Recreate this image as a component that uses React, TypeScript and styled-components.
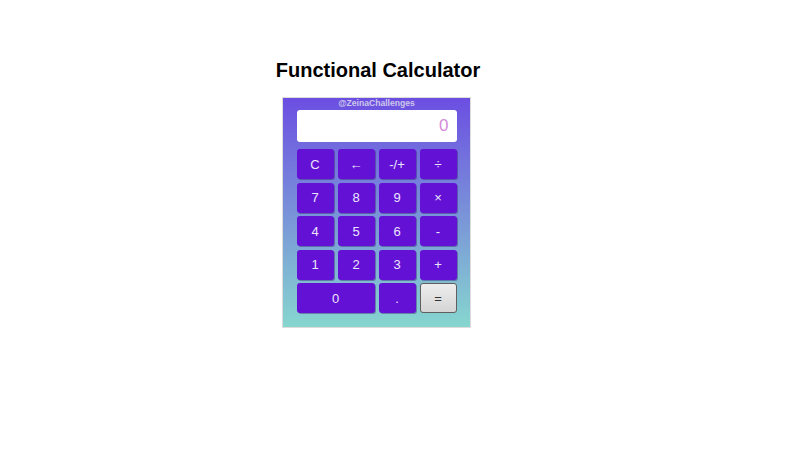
import styled, { createGlobalStyle } from 'styled-components'

const GlobalStyle = createGlobalStyle`
body {
    margin: 0;
    font-family: "Liberation Sans", Arial, sans-serif;
    background: #fff;
}
`

const keys: { label: string; wide?: boolean; equal?: boolean }[] = [
    { label: 'C' }, { label: '←' }, { label: '-/+' }, { label: '÷' },
    { label: '7' }, { label: '8' }, { label: '9' }, { label: '×' },
    { label: '4' }, { label: '5' }, { label: '6' }, { label: '-' },
    { label: '1' }, { label: '2' }, { label: '3' }, { label: '+' },
    { label: '0', wide: true }, { label: '.' }, { label: '=', equal: true },
]

const App = () => {
    return (
        <>
            <GlobalStyle />
            <Page>
                <Title>Functional Calculator</Title>
                <Card>
                    <Credit>@ZeinaChallenges</Credit>
                    <Display>0</Display>
                    <Keys>
                        {keys.map((k) => (
                            <Key key={k.label} $wide={k.wide} $equal={k.equal}>
                                {k.label}
                            </Key>
                        ))}
                    </Keys>
                </Card>
            </Page>
        </>
    )
}

export default App

const Page = styled.div`
width: 752px;
display: flex;
flex-direction: column;
align-items: center;
padding-top: 59px;
`

const Title = styled.h1`
margin: 0 0 15px;
padding-left: 4px;
font-size: 20px;
line-height: 23px;
font-weight: bold;
color: #000;
`

const Card = styled.div`
width: 160px;
padding: 0 13px 14px 14px;
border: 1px solid #dcdcdc;
background: linear-gradient(#6c4ee2, #86d6cf);
`

const Credit = styled.div`
height: 12px;
line-height: 11px;
font-size: 8.6px;
font-weight: bold;
color: #cdc8ea;
text-align: center;
`

const Display = styled.div`
height: 32px;
line-height: 32px;
background: #fff;
border-radius: 3px;
padding-right: 8px;
text-align: right;
font-size: 17px;
color: #d58bd6;
`

const Keys = styled.div`
margin-top: 7px;
display: grid;
grid-template-columns: repeat(4, 37px);
grid-auto-rows: 30px;
column-gap: 4px;
row-gap: 3.5px;
`

const Key = styled.button<{ $wide?: boolean; $equal?: boolean }>`
grid-column: ${(p) => (p.$wide ? 'span 2' : 'auto')};
display: flex;
align-items: center;
justify-content: center;
padding: 0;
font-family: "Liberation Sans", Arial, sans-serif;
font-size: 13px;
border-radius: 3px;
cursor: pointer;
background: ${(p) => (p.$equal ? 'linear-gradient(#ededed, #d5d5d5)' : '#6411d6')};
color: ${(p) => (p.$equal ? '#333' : '#ece6fa')};
border: ${(p) => (p.$equal ? '1px solid #5f5f5f' : 'none')};
box-shadow: ${(p) => (p.$equal ? 'none' : '1px 1px 0 rgba(40, 0, 90, 0.35)')};
`
